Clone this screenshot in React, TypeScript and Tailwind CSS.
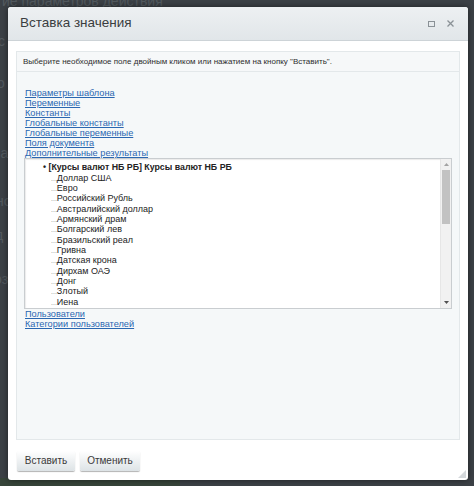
import React from "react";

const links = [
  "Параметры шаблона",
  "Переменные",
  "Константы",
  "Глобальные константы",
  "Глобальные переменные",
  "Поля документа",
  "Дополнительные результаты",
];

const currencies = [
  "Доллар США",
  "Евро",
  "Российский Рубль",
  "Австралийский доллар",
  "Армянский драм",
  "Болгарский лев",
  "Бразильский реал",
  "Гривна",
  "Датская крона",
  "Дирхам ОАЭ",
  "Донг",
  "Злотый",
  "Иена",
  "Канадский доллар",
  "Юань",
];

function LinkRow({ text }: { text: string }) {
  return (
    <div className="h-[10px] text-[9.2px] leading-[10px]">
      <a className="cursor-pointer text-[#2a67b1] underline underline-offset-1">
        {text}
      </a>
    </div>
  );
}

function Scrollbar() {
  return (
    <div className="flex w-[11px] flex-col items-center border-l border-[#e6e6e6] bg-[#f1f1f1]">
      <div className="flex h-[11px] items-center justify-center">
        <svg width="5" height="3" viewBox="0 0 5 3">
          <path d="M0 3 L2.5 0 L5 3 Z" fill="#a3a3a3" />
        </svg>
      </div>
      <div className="h-[54px] w-[8px] bg-[#c2c2c2]" />
      <div className="flex-1" />
      <div className="flex h-[11px] items-center justify-center">
        <svg width="5" height="3" viewBox="0 0 5 3">
          <path d="M0 0 L5 0 L2.5 3 Z" fill="#505050" />
        </svg>
      </div>
    </div>
  );
}

export default function App() {
  return (
    <div className="relative h-[486px] w-[474px] overflow-hidden bg-[#3c4146] font-['Liberation_Sans',Arial,sans-serif]">
      {/* page behind the overlay */}
      <div className="flex flex-col text-[14px] leading-[14px] text-[#535a5f]">
        <div className="-mt-[6px] pl-[2px]">ие параметров действия</div>
        <div className="-ml-[2px] mt-[26px]">с</div>
        <div className="-ml-[3px] mt-[28px]">о</div>
        <div className="-ml-[6px] mt-[56px]">за</div>
        <div className="-ml-[4px] mt-[34px]">но</div>
        <div className="-ml-[5px] mt-[20px]">д</div>
        <div className="-ml-[6px] mt-[30px]">оз</div>
      </div>
      <div className="absolute bottom-0 left-0 h-[8px] w-[180px] bg-[#37453a]" />

      {/* dialog */}
      <div className="absolute left-[8px] top-[7px] flex h-[473px] w-[460px] flex-col rounded-[3px] bg-white shadow-[0_0_6px_rgba(0,0,0,0.5)]">
        <div className="flex h-[34px] items-center justify-between rounded-t-[3px] border-b border-[#cdd3d7] bg-gradient-to-b from-[#edf0f2] to-[#e1e6e9] pl-[12px] pr-[14px]">
          <span className="text-[13.5px] text-[#3a3d40]">Вставка значения</span>
          <div className="flex items-center gap-[12px]">
            <div className="h-[6px] w-[7px] border border-[#8a9196]" />
            <svg width="7" height="7" viewBox="0 0 7 7">
              <path d="M0.5 0.5 L6.5 6.5 M6.5 0.5 L0.5 6.5" stroke="#8a9196" strokeWidth="1.3" />
            </svg>
          </div>
        </div>

        <div className="flex flex-1 flex-col px-[8px] pt-[10px]">
          <div className="flex h-[21px] items-center border border-[#e3e8ea] bg-[#f6f8f9] px-[6px] text-[8px] text-[#2e2e2e]">
            Выберите необходимое поле двойным кликом или нажатием на кнопку "Вставить".
          </div>
          <div className="flex h-[368px] flex-col border border-t-0 border-[#e3e8ea] bg-[#f5f8f9] pl-[8px] pr-[7px] pt-[16px]">
            {links.map((l) => (
              <LinkRow key={l} text={l} />
            ))}
            <div className="-ml-px flex h-[151px] border border-[#c9cdd0] bg-white shadow-[inset_1px_1px_1px_rgba(0,0,0,0.08)]">
              <div className="flex-1 overflow-hidden pt-[3px] text-[9px] text-[#222]">
                <div className="h-[10.6px] pl-[18px] text-[8.8px] font-bold leading-[10.6px]">
                  • [Курсы валют НБ РБ] Курсы валют НБ РБ
                </div>
                {currencies.map((c) => (
                  <div key={c} className="h-[10.35px] pl-[26px] leading-[10.35px]">
                    <span className="text-[7px] leading-none text-[#8a8a8a]">...</span>
                    {c}
                  </div>
                ))}
              </div>
              <Scrollbar />
            </div>
            <LinkRow text="Пользователи" />
            <LinkRow text="Категории пользователей" />
          </div>
        </div>

        <div className="relative flex h-[40px] items-center gap-[5px] px-[9px] pt-[1px]">
          <button className="h-[20px] w-[58px] rounded-[2px] bg-gradient-to-b from-white to-[#dde3e6] text-[10px] text-[#3a3a3a] shadow-[0_1px_1px_rgba(0,0,0,0.3)]">
            Вставить
          </button>
          <button className="h-[20px] w-[60px] rounded-[2px] bg-gradient-to-b from-white to-[#dde3e6] text-[10px] text-[#3a3a3a] shadow-[0_1px_1px_rgba(0,0,0,0.3)]">
            Отменить
          </button>
          <svg className="absolute bottom-[2px] right-[2px]" width="8" height="8" viewBox="0 0 8 8">
            <path d="M8 0 L8 8 L0 8 Z" fill="#d4d8db" />
          </svg>
        </div>
      </div>
    </div>
  );
}
